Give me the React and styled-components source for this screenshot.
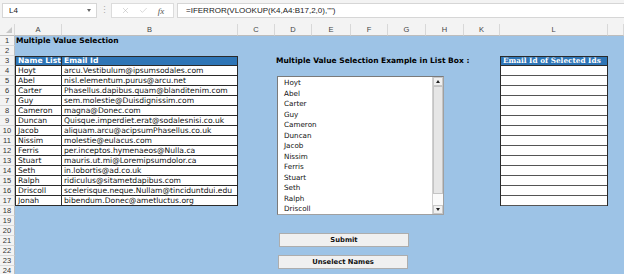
import React from 'react'
import styled, { createGlobalStyle } from 'styled-components'
import { X, Check } from 'lucide-react'

const GlobalStyle = createGlobalStyle`
  html, body {
    margin: 0;
    padding: 0;
    background: #9dc3e6;
  }
  body {
    width: 624px;
    height: 274px;
    overflow: hidden;
  }
`

const COLS = '15px 47px 176px 37px 37px 39px 37px 38px 38px 36px 108px 16px'
const LETTERS = ['A', 'B', 'C', 'D', 'E', 'F', 'G', 'H', 'K', 'L', '']

const people = [
  ['Hoyt', 'arcu.Vestibulum@ipsumsodales.com'],
  ['Abel', 'nisl.elementum.purus@arcu.net'],
  ['Carter', 'Phasellus.dapibus.quam@blanditenim.com'],
  ['Guy', 'sem.molestie@Duisdignissim.com'],
  ['Cameron', 'magna@Donec.com'],
  ['Duncan', 'Quisque.imperdiet.erat@sodalesnisi.co.uk'],
  ['Jacob', 'aliquam.arcu@acipsumPhasellus.co.uk'],
  ['Nissim', 'molestie@eulacus.com'],
  ['Ferris', 'per.inceptos.hymenaeos@Nulla.ca'],
  ['Stuart', 'mauris.ut.mi@Loremipsumdolor.ca'],
  ['Seth', 'in.lobortis@ad.co.uk'],
  ['Ralph', 'ridiculus@sitametdapibus.com'],
  ['Driscoll', 'scelerisque.neque.Nullam@tinciduntdui.edu'],
  ['Jonah', 'bibendum.Donec@ametluctus.org'],
]

const Page = styled.div`
  position: relative;
  width: 624px;
  height: 274px;
  overflow: hidden;
  background: #9dc3e6;
`

const FormulaBar = styled.div`
  height: 24px;
  display: flex;
  align-items: flex-start;
  padding-top: 3px;
  box-sizing: border-box;
  background: #f3f3f3;
  font-family: "Liberation Sans", Arial, sans-serif;
`

const NameBox = styled.div`
  width: 95px;
  height: 15px;
  margin-left: 2px;
  box-sizing: border-box;
  background: #fff;
  border: 1px solid #d6d6d6;
  display: flex;
  align-items: center;
  justify-content: space-between;
  padding: 0 5px 0 6px;
  font-size: 8px;
  color: #222;
`

const Caret = styled.span`
  width: 0;
  height: 0;
  border-left: 2.5px solid transparent;
  border-right: 2.5px solid transparent;
  border-top: 3px solid #666;
`

const Grip = styled.span`
  width: 14px;
  text-align: center;
  color: #aaa;
  font-size: 9px;
  line-height: 15px;
`

const ButtonsBox = styled.div`
  width: 63px;
  height: 15px;
  box-sizing: border-box;
  background: #fff;
  border: 1px solid #dcdcdc;
  display: flex;
  align-items: center;
  justify-content: space-around;
  padding: 0 4px;
  color: #b0b0b0;
`

const Fx = styled.span`
  font-family: "Liberation Serif", serif;
  font-style: italic;
  font-size: 9px;
  color: #555;
`

const FormulaInput = styled.div`
  flex: 1;
  height: 15px;
  margin-left: 3px;
  box-sizing: border-box;
  background: #fff;
  border: 1px solid #d6d6d6;
  border-right: none;
  padding-left: 8px;
  font-size: 8px;
  line-height: 13px;
  color: #222;
  white-space: nowrap;
`

const Row = styled.div`
  display: grid;
  grid-template-columns: ${COLS};
  grid-template-rows: ${p => (p.$head ? '12px' : '10px')};
  height: ${p => (p.$head ? '12px' : '10px')};
`

const ColHead = styled.div`
  background: #f3f3f3;
  border-right: 1px solid #d8d8d8;
  border-bottom: 1px solid #bdbdbd;
  font-family: "Liberation Sans", Arial, sans-serif;
  font-size: 7.5px;
  color: #444;
  text-align: center;
  line-height: 11px;
  box-sizing: border-box;
`

const Corner = styled(ColHead)`
  position: relative;
  &::after {
    content: '';
    position: absolute;
    right: 2px;
    bottom: 2px;
    border-left: 6px solid transparent;
    border-bottom: 6px solid #c8c8c8;
  }
`

const RowHead = styled.div`
  background: #f3f3f3;
  border-right: 1px solid #bdbdbd;
  border-bottom: 1px solid #dadada;
  font-family: "Liberation Sans", Arial, sans-serif;
  font-size: 7.5px;
  color: #333;
  text-align: center;
  line-height: 10px;
  box-sizing: border-box;
`

const Cell = styled.div`
  box-sizing: border-box;
  white-space: nowrap;
  overflow: visible;
  font-family: "DejaVu Sans", Verdana, sans-serif;
  font-size: 7.6px;
  line-height: 10px;
  padding-left: 2px;
  color: #111;
  position: relative;
  z-index: 1;
`

const TitleCell = styled(Cell)`
  font-weight: bold;
  font-size: 7.5px;
  color: #000;
  padding-left: 1px;
`

const TableCell = styled(Cell)`
  height: 10px;
  background: ${p => (p.$head ? '#2e75b6' : '#fff')};
  color: ${p => (p.$head ? '#fff' : '#111')};
  font-weight: ${p => (p.$head ? 'bold' : 'normal')};
  border-right: 1px solid #2a2a2a;
  border-left: ${p => (p.$first ? '1px solid #2a2a2a' : 'none')};
  border-top: ${p => (p.$top ? '1px solid #2a2a2a' : 'none')};
  box-shadow: inset 0 -1px 0 ${p => (p.$dim ? '#555' : '#2a2a2a')};
  line-height: ${p => (p.$top ? '8px' : '9px')};
  overflow: hidden;
`

const SerifHead = styled(TableCell)`
  font-family: "DejaVu Serif", "Liberation Serif", serif;
  font-size: 7.3px;
`

const ListBox = styled.div`
  position: absolute;
  left: 277px;
  top: 76px;
  width: 167px;
  height: 139px;
  box-sizing: border-box;
  background: #fff;
  border: 1px solid #a0a0a0;
  border-top-color: #7a7a7a;
  border-left-color: #7a7a7a;
  display: flex;
  z-index: 2;
`

const Items = styled.div`
  flex: 1;
  padding: 1px 0 0 6px;
  font-family: "DejaVu Sans", Tahoma, sans-serif;
  font-size: 7.2px;
  line-height: 10.5px;
  color: #111;
  overflow: hidden;
`

const ScrollBar = styled.div`
  width: 10px;
  display: flex;
  flex-direction: column;
  background: #f7f7f7;
  border-left: 1px solid #d0d0d0;
`

const Arrow = styled.div`
  height: 9px;
  background: #f0f0f0;
  border: 1px solid #c8c8c8;
  box-sizing: border-box;
  display: flex;
  align-items: center;
  justify-content: center;
  &::after {
    content: '';
    border-left: 2.5px solid transparent;
    border-right: 2.5px solid transparent;
    ${p => (p.$down ? 'border-top: 3px solid #222;' : 'border-bottom: 3px solid #222;')}
  }
`

const Thumb = styled.div`
  height: 108px;
  background: #e6e6e6;
  border: 1px solid #c4c4c4;
  box-sizing: border-box;
`

const Track = styled.div`
  flex: 1;
  background: #fafafa;
`

const Controls = styled.div`
  position: absolute;
  left: 278px;
  top: 233px;
  display: flex;
  flex-direction: column;
  gap: 8px;
  z-index: 2;
`

const FormButton = styled.div`
  width: 130px;
  height: 14px;
  margin-left: ${p => p.$shift || 0}px;
  box-sizing: border-box;
  background: #f0f0f0;
  border: 1px solid #adadad;
  font-family: "DejaVu Sans", Tahoma, sans-serif;
  font-weight: bold;
  font-size: 6.8px;
  line-height: 12px;
  text-align: center;
  color: #111;
`

function SheetRow({ n, cells }) {
  const list = Array.from({ length: 11 }, (_, i) => cells[i] || <Cell key={i} />)
  return (
    <Row>
      <RowHead>{n}</RowHead>
      {list}
    </Row>
  )
}

export default function App() {
  const rows = []
  for (let n = 1; n <= 24; n++) {
    const c = {}
    if (n === 1) c[0] = <TitleCell key="a">Multiple Value Selection</TitleCell>
    if (n === 3) {
      c[0] = <TableCell key="a" $head $first $top>Name List</TableCell>
      c[1] = <TableCell key="b" $head $top>Email Id</TableCell>
      c[3] = <TitleCell key="d">Multiple Value Selection Example in List Box :</TitleCell>
      c[9] = <SerifHead key="l" $head $first $top>Email Id of Selected Ids</SerifHead>
    }
    if (n >= 4 && n <= 17) {
      const [name, mail] = people[n - 4]
      c[0] = <TableCell key="a" $first>{name}</TableCell>
      c[1] = <TableCell key="b">{mail}</TableCell>
      c[9] = <TableCell key="l" $first $dim>{'\u00a0'}</TableCell>
    }
    rows.push(<SheetRow key={n} n={n} cells={c} />)
  }

  return (
    <Page>
      <GlobalStyle />
      <FormulaBar>
        <NameBox>L4<Caret /></NameBox>
        <Grip>⋮</Grip>
        <ButtonsBox>
          <X size={9} strokeWidth={1.3} />
          <Check size={9} strokeWidth={1.3} />
          <Fx>fx</Fx>
        </ButtonsBox>
        <FormulaInput>=IFERROR(VLOOKUP(K4,A4:B17,2,0),"")</FormulaInput>
      </FormulaBar>
      <Row $head>
        <Corner />
        {LETTERS.map((l, i) => <ColHead key={i}>{l}</ColHead>)}
      </Row>
      {rows}
      <ListBox>
        <Items>
          {people.slice(0, 13).map(([name]) => <div key={name}>{name}</div>)}
        </Items>
        <ScrollBar>
          <Arrow />
          <Thumb />
          <Track />
          <Arrow $down />
        </ScrollBar>
      </ListBox>
      <Controls>
        <FormButton $shift={1}>Submit</FormButton>
        <FormButton>Unselect Names</FormButton>
      </Controls>
    </Page>
  )
}
